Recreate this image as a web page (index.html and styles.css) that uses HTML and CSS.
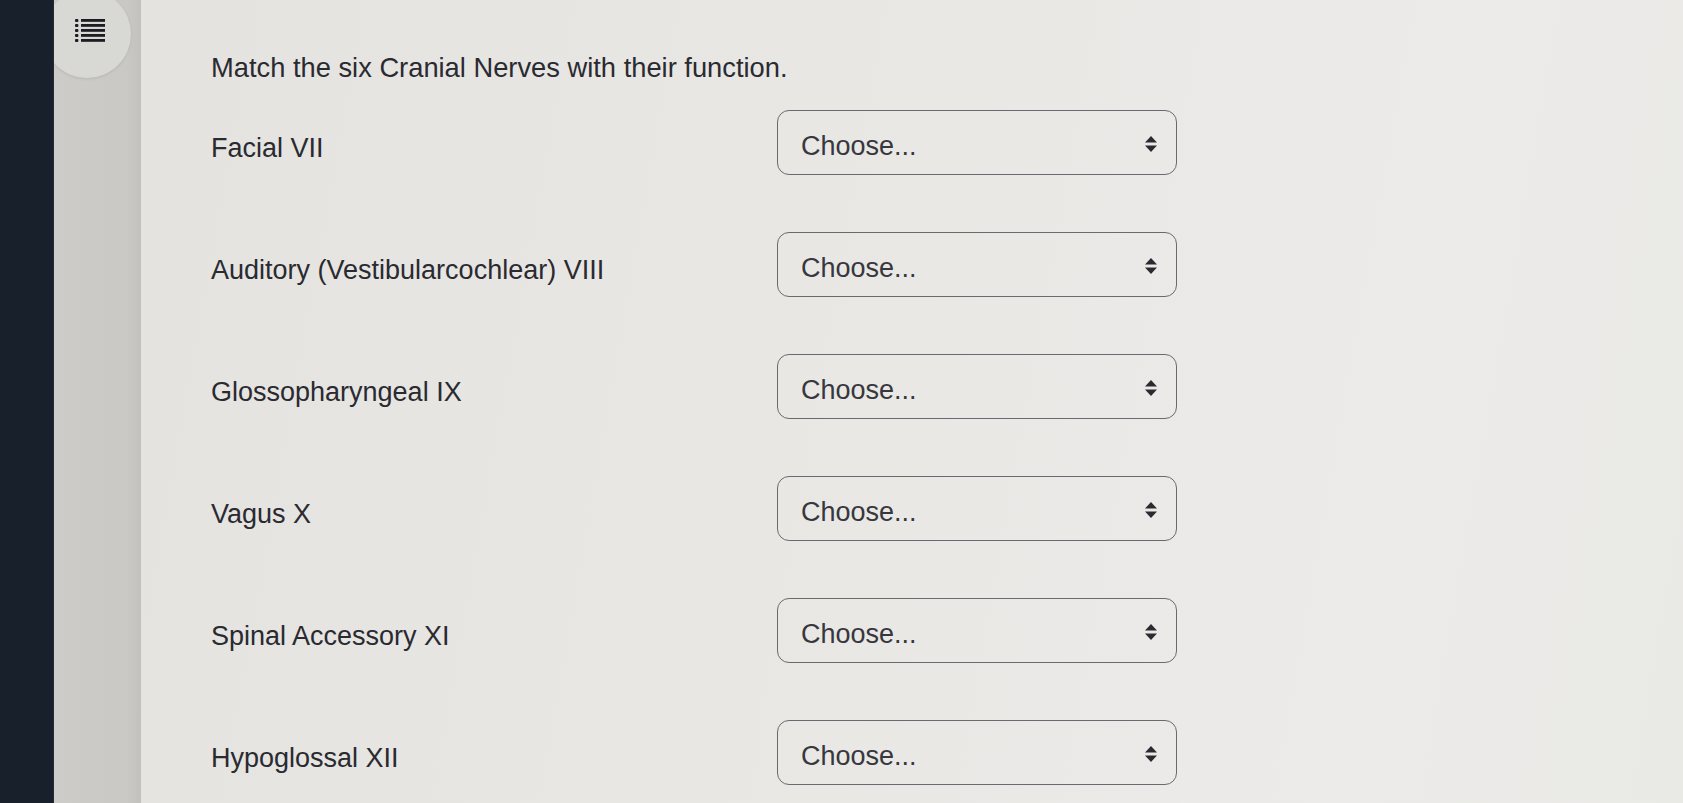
FILE: index.html
```html
<!DOCTYPE html>
<html>
<head>
<meta charset="utf-8">
<link rel="stylesheet" href="styles.css">
</head>
<body>
<div class="page">
  <div class="strip"></div>
  <div class="panel">
    <div class="toggle">
      <svg class="list-icon" width="30" height="24" viewBox="0 0 30 24">
        <g fill="#1c1c22">
          <rect x="0" y="1" width="3.4" height="3" rx="1"/>
          <rect x="0" y="6" width="3.4" height="3" rx="1"/>
          <rect x="0" y="11" width="3.4" height="3" rx="1"/>
          <rect x="0" y="16" width="3.4" height="3" rx="1"/>
          <rect x="0" y="21" width="3.4" height="3" rx="1"/>
          <rect x="6" y="1" width="24" height="2.8"/>
          <rect x="6" y="6" width="24" height="2.8"/>
          <rect x="6" y="11" width="24" height="2.8"/>
          <rect x="6" y="16" width="24" height="2.8"/>
          <rect x="6" y="21" width="24" height="2.8"/>
        </g>
      </svg>
    </div>
  </div>
  <main class="content">
    <p class="question">Match the six Cranial Nerves with their function.</p>
    <div class="rows">
      <div class="row"><span class="label">Facial VII</span><div class="select"><span class="value">Choose...</span><svg class="arrows" width="12" height="16" viewBox="0 0 12 16"><path d="M6 0 L12 6.5 H0 Z M0 9.5 H12 L6 16 Z" fill="#2a2a30"/></svg></div></div>
      <div class="row"><span class="label">Auditory (Vestibularcochlear) VIII</span><div class="select"><span class="value">Choose...</span><svg class="arrows" width="12" height="16" viewBox="0 0 12 16"><path d="M6 0 L12 6.5 H0 Z M0 9.5 H12 L6 16 Z" fill="#2a2a30"/></svg></div></div>
      <div class="row"><span class="label">Glossopharyngeal IX</span><div class="select"><span class="value">Choose...</span><svg class="arrows" width="12" height="16" viewBox="0 0 12 16"><path d="M6 0 L12 6.5 H0 Z M0 9.5 H12 L6 16 Z" fill="#2a2a30"/></svg></div></div>
      <div class="row"><span class="label">Vagus X</span><div class="select"><span class="value">Choose...</span><svg class="arrows" width="12" height="16" viewBox="0 0 12 16"><path d="M6 0 L12 6.5 H0 Z M0 9.5 H12 L6 16 Z" fill="#2a2a30"/></svg></div></div>
      <div class="row"><span class="label">Spinal Accessory XI</span><div class="select"><span class="value">Choose...</span><svg class="arrows" width="12" height="16" viewBox="0 0 12 16"><path d="M6 0 L12 6.5 H0 Z M0 9.5 H12 L6 16 Z" fill="#2a2a30"/></svg></div></div>
      <div class="row"><span class="label">Hypoglossal XII</span><div class="select"><span class="value">Choose...</span><svg class="arrows" width="12" height="16" viewBox="0 0 12 16"><path d="M6 0 L12 6.5 H0 Z M0 9.5 H12 L6 16 Z" fill="#2a2a30"/></svg></div></div>
    </div>
  </main>
</div>
</body>
</html>
```

FILE: styles.css
```css
html, body {
  margin: 0;
  padding: 0;
  height: 100%;
  overflow: hidden;
}
body {
  font-family: "Liberation Sans", Arial, sans-serif;
  background: #e6e5e2;
}
.page {
  display: flex;
  height: 803px;
}
.strip {
  width: 54px;
  flex: none;
  background: #18202b;
  border-right: 1px solid #2a2a2e;
  box-sizing: border-box;
}
.panel {
  width: 87px;
  flex: none;
  background: linear-gradient(90deg, #cdccc8 0%, #c9c8c4 85%, #c2c1bd 100%);
  overflow: hidden;
}
.toggle {
  width: 88px;
  height: 88px;
  margin-left: -11px;
  margin-top: -10px;
  border-radius: 50%;
  background: #d8d8d5;
  box-shadow: 0 1px 3px rgba(0,0,0,0.1);
  display: flex;
  align-items: center;
  justify-content: center;
  box-sizing: border-box;
  padding-bottom: 8px;
  padding-left: 5px;
}
.content {
  flex: 1;
  padding-left: 70px;
  background: linear-gradient(100deg, #e4e3df 0%, #e8e7e4 40%, #ecebe9 80%, #e9e9e6 100%);
}
.question {
  margin: 52px 0 0 0;
  font-size: 27.3px;
  line-height: 32px;
  color: #2a2a31;
}
.rows {
  display: flex;
  flex-direction: column;
  gap: 57px;
  margin-top: 26px;
}
.row {
  display: flex;
  align-items: center;
  height: 65px;
}
.label {
  width: 566px;
  flex: none;
  font-size: 27px;
  color: #2a2a31;
  padding-top: 11px;
}
.select {
  width: 400px;
  height: 65px;
  box-sizing: border-box;
  border: 1.6px solid #69696f;
  border-radius: 12px;
  background: transparent;
  display: flex;
  align-items: center;
  justify-content: space-between;
  padding: 0 19px 0 23px;
  font-size: 27px;
  color: #37373d;
}
.value {
  padding-top: 7px;
}
.arrows {
  display: block;
  margin-top: 2px;
}
```
